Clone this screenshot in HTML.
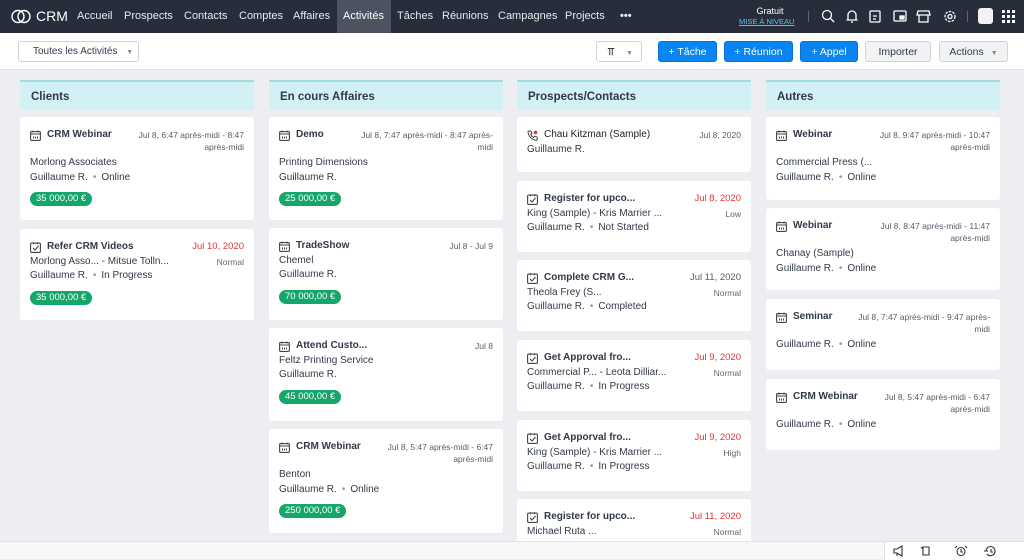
<!DOCTYPE html>
<html><head><meta charset="utf-8"><style>
*{box-sizing:border-box;margin:0;padding:0}
body{width:1024px;height:559px;overflow:hidden;font-family:"Liberation Sans",sans-serif;background:#eceef2;position:relative;color:#313949}
.top{position:absolute;left:0;top:0;width:1024px;height:33px;background:#262d3b;color:#fff}
.nav{position:absolute;top:10px;font-size:11px;color:#e8eaee}
.act{position:absolute;left:337px;top:0;width:54px;height:33px;background:#4b5260}
.bar{position:absolute;left:0;top:33px;width:1024px;height:37px;background:#fff;border-bottom:1px solid #dfe2e7}
.btn{position:absolute;top:41px;height:21px;border-radius:3px;font-size:10.5px;line-height:20px;text-align:center}
.blue{background:#0a84f0;color:#fff;border:1px solid #0872d8}
.grey{background:#f1f2f4;border:1px solid #cfd3d9;color:#313949}
.wh{background:#fff;border:1px solid #cfd3d9;color:#313949}
.col{position:absolute;top:80px;width:234px;height:30px;background:#d2f1f4;border-top:2px solid #9fdde3;font-weight:bold;font-size:11.5px;padding:9px 0 0 11px}
.card{position:absolute;width:234px;background:#fff;border-radius:3px;font-size:10px;padding:11px 10px 0 10px;line-height:14.5px}
.t{font-weight:bold;font-size:10px;display:flex;align-items:flex-start}
.t svg{margin-right:6px;flex:none;margin-top:2px}
.t .n{flex:none}
.t .d{margin-left:auto;font-weight:normal;font-size:8.5px;color:#555d6a;text-align:right;line-height:12px;padding-top:1px;padding-left:5px;max-width:140px}
.red{color:#e53535!important}
.row{display:flex}
.row .r{margin-left:auto;font-size:8.5px;color:#666}
.amt{display:inline-block;background:#15a66a;color:#fff;font-size:9.5px;border-radius:8px;padding:0 6px;line-height:14px;margin-top:7px}
.dot{color:#999;margin:0 5px}
.foot{position:absolute;left:0;top:541px;width:1024px;height:18px;background:#f7f8fa;border-top:1px solid #dfe2e7}
</style></head><body>
<div class="top">
<svg style="position:absolute;left:11px;top:9px" width="20" height="15" viewBox="0 0 20 15"><ellipse cx="7" cy="7.5" rx="6" ry="6" fill="none" stroke="#fff" stroke-width="1.4"/><ellipse cx="13" cy="7.5" rx="6" ry="6" fill="none" stroke="#fff" stroke-width="1.4"/></svg>
<div style="position:absolute;left:36px;top:8px;font-size:14px;color:#fff">CRM</div>
<div class="act"></div>
<div class="nav" style="left:77px">Accueil</div>
<div class="nav" style="left:124px">Prospects</div>
<div class="nav" style="left:184px">Contacts</div>
<div class="nav" style="left:239px">Comptes</div>
<div class="nav" style="left:293px">Affaires</div>
<div class="nav" style="left:343px;color:#fff">Activités</div>
<div class="nav" style="left:397px">Tâches</div>
<div class="nav" style="left:442px">Réunions</div>
<div class="nav" style="left:498px">Campagnes</div>
<div class="nav" style="left:565px">Projects</div>
<div class="nav" style="left:620px;font-weight:bold">•••</div>
<div style="position:absolute;left:740px;top:6px;font-size:9px;width:60px;text-align:center">Gratuit</div>
<div style="position:absolute;left:739px;top:17px;font-size:7.5px;color:#5bc0f0;text-decoration:underline">MISE À NIVEAU</div>
<div style="position:absolute;left:808px;top:11px;width:1px;height:11px;background:#666"></div>
<svg style="position:absolute;left:821px;top:9px" width="150" height="15" viewBox="0 0 150 15" fill="none" stroke="#fff" stroke-width="1.3"><circle cx="6" cy="6" r="4.5"/><path d="M9.5 9.5l3.5 3.5"/><path d="M27 11V6a4 4 0 018 0v5h1.5h-11zM30 13h2"/><rect x="49" y="2" width="10" height="11" rx="1"/><path d="M52 7h4M52 10h3"/><rect x="73" y="2" width="12" height="10" rx="1"/><rect x="79" y="7" width="4" height="3" fill="#fff"/><path d="M97 2h11l1 4h-13zM98 6v7h9V6"/><circle cx="129" cy="7.5" r="2"/><circle cx="129" cy="7.5" r="5" stroke-dasharray="2.5 1.2"/></svg>
<div style="position:absolute;left:967px;top:11px;width:1px;height:11px;background:#666"></div>
<div style="position:absolute;left:978px;top:8px;width:15px;height:16px;background:#f2f2f2;border-radius:3px"></div>
<svg style="position:absolute;left:1002px;top:10px" width="13" height="13" viewBox="0 0 13 13" fill="#fff"><rect x="0" y="0" width="3" height="3"/><rect x="5" y="0" width="3" height="3"/><rect x="10" y="0" width="3" height="3"/><rect x="0" y="5" width="3" height="3"/><rect x="5" y="5" width="3" height="3"/><rect x="10" y="5" width="3" height="3"/><rect x="0" y="10" width="3" height="3"/><rect x="5" y="10" width="3" height="3"/><rect x="10" y="10" width="3" height="3"/></svg>
</div>
<div class="bar"></div>
<div class="btn wh" style="left:18px;width:121px;text-align:left;padding-left:14px;font-size:10px">Toutes les Activités <span style="font-size:7px;color:#888;margin-left:6px">▼</span></div>
<div class="btn wh" style="left:596px;width:46px;text-align:left;padding-left:11px;font-weight:bold">⫪<span style="font-size:7px;color:#888;margin-left:12px;font-weight:normal">▼</span></div>
<div class="btn blue" style="left:658px;width:59px">+ Tâche</div>
<div class="btn blue" style="left:724px;width:69px">+ Réunion</div>
<div class="btn blue" style="left:800px;width:58px">+ Appel</div>
<div class="btn grey" style="left:865px;width:66px">Importer</div>
<div class="btn grey" style="left:939px;width:69px">Actions <span style="font-size:7px;color:#888;margin-left:4px">▼</span></div>

<div class="col" style="left:20px">Clients</div>
<div class="col" style="left:269px">En cours Affaires</div>
<div class="col" style="left:517px">Prospects/Contacts</div>
<div class="col" style="left:766px">Autres</div>

<svg width="0" height="0" style="position:absolute"><defs>
<symbol id="cal" viewBox="0 0 11 11"><rect x="0.6" y="1.6" width="9.8" height="8.8" rx="1" fill="none" stroke="#444" stroke-width="1.1"/><path d="M0.6 4h9.8M3 0.5v2M8 0.5v2M3.5 6.5v2M5.5 6.5v2M7.5 6.5v2" stroke="#444" stroke-width="1"/></symbol>
<symbol id="chk" viewBox="0 0 11 11"><rect x="0.6" y="1.1" width="9.8" height="9.3" rx="1" fill="none" stroke="#444" stroke-width="1.1"/><path d="M3 6l2 2 3.5-4" fill="none" stroke="#444" stroke-width="1.1"/><path d="M3.5 0.3v2M7.5 0.3v2" stroke="#444"/></symbol>
<symbol id="ph" viewBox="0 0 11 11"><path d="M2 1l2 0 1 2.5-1.3 1a6 6 0 003 3l1-1.3 2.5 1v2a1 1 0 01-1 1A9 9 0 011 2a1 1 0 011-1z" fill="none" stroke="#444" stroke-width="1"/><circle cx="8.5" cy="2.5" r="1.8" fill="#e53535"/></symbol>
</defs></svg>

<!-- col 1 -->
<div class="card" style="left:20px;top:117px;height:103px"><div class="t"><svg width="11" height="11"><use href="#cal"/></svg><span class="n">CRM Webinar</span><span class="d">Jul 8, 6:47 après-midi - 8:47 après-midi</span></div><div style="margin-top:3px">Morlong Associates</div><div>Guillaume R.<span class="dot">•</span>Online</div><span class="amt">35 000,00 €</span></div>
<div class="card" style="left:20px;top:229px;height:91px"><div class="t"><svg width="11" height="11"><use href="#chk"/></svg><span class="n">Refer CRM Videos</span><span class="d red" style="font-size:9.5px">Jul 10, 2020</span></div><div class="row">Morlong Asso... - Mitsue Tolln...<span class="r">Normal</span></div><div>Guillaume R.<span class="dot">•</span>In Progress</div><span class="amt">35 000,00 €</span></div>

<!-- col 2 -->
<div class="card" style="left:269px;top:117px;height:103px"><div class="t"><svg width="11" height="11"><use href="#cal"/></svg><span class="n">Demo</span><span class="d">Jul 8, 7:47 après-midi - 8:47 après-midi</span></div><div style="margin-top:3px">Printing Dimensions</div><div>Guillaume R.</div><span class="amt">25 000,00 €</span></div>
<div class="card" style="left:269px;top:228px;height:92px"><div class="t"><svg width="11" height="11"><use href="#cal"/></svg><span class="n">TradeShow</span><span class="d">Jul 8 - Jul 9</span></div><div>Chemel</div><div>Guillaume R.</div><span class="amt">70 000,00 €</span></div>
<div class="card" style="left:269px;top:328px;height:93px"><div class="t"><svg width="11" height="11"><use href="#cal"/></svg><span class="n">Attend Custo...</span><span class="d">Jul 8</span></div><div>Feltz Printing Service</div><div>Guillaume R.</div><span class="amt">45 000,00 €</span></div>
<div class="card" style="left:269px;top:429px;height:104px"><div class="t"><svg width="11" height="11"><use href="#cal"/></svg><span class="n">CRM Webinar</span><span class="d">Jul 8, 5:47 après-midi - 6:47 après-midi</span></div><div style="margin-top:3px">Benton</div><div>Guillaume R.<span class="dot">•</span>Online</div><span class="amt">250 000,00 €</span></div>

<!-- col 3 -->
<div class="card" style="left:517px;top:117px;height:55px"><div class="t"><svg width="11" height="11"><use href="#ph"/></svg><span class="n" style="font-weight:normal;color:#222">Chau Kitzman (Sample)</span><span class="d">Jul 8, 2020</span></div><div>Guillaume R.</div></div>
<div class="card" style="left:517px;top:181px;height:71px"><div class="t"><svg width="11" height="11"><use href="#chk"/></svg><span class="n">Register for upco...</span><span class="d red" style="font-size:9.5px">Jul 8, 2020</span></div><div class="row">King (Sample) - Kris Marrier ...<span class="r">Low</span></div><div>Guillaume R.<span class="dot">•</span>Not Started</div></div>
<div class="card" style="left:517px;top:260px;height:71px"><div class="t"><svg width="11" height="11"><use href="#chk"/></svg><span class="n">Complete CRM G...</span><span class="d" style="font-size:9.5px">Jul 11, 2020</span></div><div class="row">Theola Frey (S...<span class="r">Normal</span></div><div>Guillaume R.<span class="dot">•</span>Completed</div></div>
<div class="card" style="left:517px;top:340px;height:71px"><div class="t"><svg width="11" height="11"><use href="#chk"/></svg><span class="n">Get Approval fro...</span><span class="d red" style="font-size:9.5px">Jul 9, 2020</span></div><div class="row">Commercial P... - Leota Dilliar...<span class="r">Normal</span></div><div>Guillaume R.<span class="dot">•</span>In Progress</div></div>
<div class="card" style="left:517px;top:420px;height:71px"><div class="t"><svg width="11" height="11"><use href="#chk"/></svg><span class="n">Get Apporval fro...</span><span class="d red" style="font-size:9.5px">Jul 9, 2020</span></div><div class="row">King (Sample) - Kris Marrier ...<span class="r">High</span></div><div>Guillaume R.<span class="dot">•</span>In Progress</div></div>
<div class="card" style="left:517px;top:499px;height:50px"><div class="t"><svg width="11" height="11"><use href="#chk"/></svg><span class="n">Register for upco...</span><span class="d red" style="font-size:9.5px">Jul 11, 2020</span></div><div class="row">Michael Ruta ...<span class="r">Normal</span></div></div>

<!-- col 4 -->
<div class="card" style="left:766px;top:117px;height:83px"><div class="t"><svg width="11" height="11"><use href="#cal"/></svg><span class="n">Webinar</span><span class="d">Jul 8, 9:47 après-midi - 10:47 après-midi</span></div><div style="margin-top:3px">Commercial Press (...</div><div>Guillaume R.<span class="dot">•</span>Online</div></div>
<div class="card" style="left:766px;top:208px;height:82px"><div class="t"><svg width="11" height="11"><use href="#cal"/></svg><span class="n">Webinar</span><span class="d">Jul 8, 8:47 après-midi - 11:47 après-midi</span></div><div style="margin-top:3px">Chanay (Sample)</div><div>Guillaume R.<span class="dot">•</span>Online</div></div>
<div class="card" style="left:766px;top:299px;height:71px"><div class="t"><svg width="11" height="11"><use href="#cal"/></svg><span class="n">Seminar</span><span class="d">Jul 8, 7:47 après-midi - 9:47 après-midi</span></div><div style="margin-top:3px">Guillaume R.<span class="dot">•</span>Online</div></div>
<div class="card" style="left:766px;top:379px;height:71px"><div class="t"><svg width="11" height="11"><use href="#cal"/></svg><span class="n">CRM Webinar</span><span class="d">Jul 8, 5:47 après-midi - 6:47 après-midi</span></div><div style="margin-top:3px">Guillaume R.<span class="dot">•</span>Online</div></div>

<div class="foot">
<div style="position:absolute;left:884px;top:0;width:140px;height:18px;background:#fff;border-left:1px solid #dfe2e7"></div>
<svg style="position:absolute;left:893px;top:3px" width="125" height="12" viewBox="0 0 125 12" fill="none" stroke="#333" stroke-width="1.1"><path d="M1 4h3l5-3v10l-5-3H1zM4 8v3"/><path d="M30 2h6v8h-6zM28 2l2 2"/><circle cx="68" cy="6.5" r="4"/><path d="M68 4v3h2M64 1l-2 2M72 1l2 2"/><path d="M93 6a4.5 4.5 0 119 0a4.5 4.5 0 01-8 3M91 6h4M98 4v3h2"/></svg>
</div>
</body></html>
